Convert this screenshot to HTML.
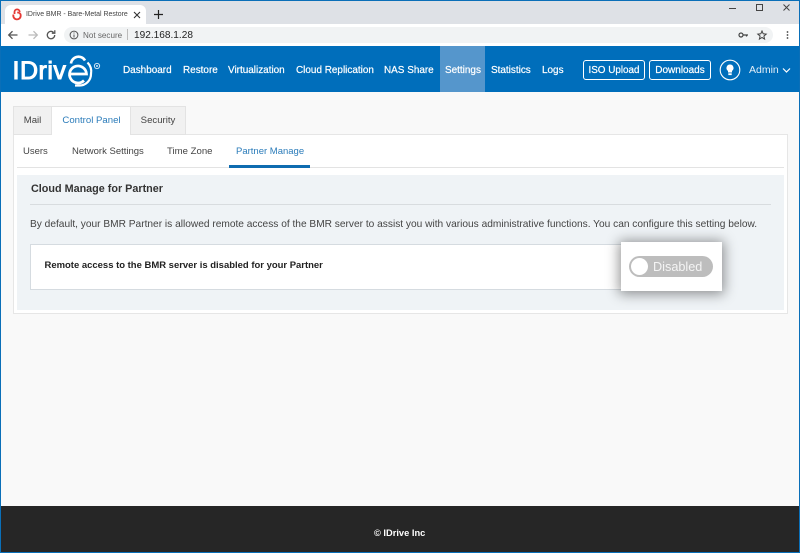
<!DOCTYPE html>
<html><head><meta charset="utf-8"><title>IDrive BMR</title>
<style>
*{box-sizing:border-box}
html,body{margin:0;padding:0;width:800px;height:553px;overflow:hidden;background:#f9f9f9;font-family:"Liberation Sans",sans-serif}
.a{position:absolute;white-space:nowrap}
.n{position:absolute;top:64px;font-size:9.950px;line-height:14px;color:#fff;white-space:nowrap;-webkit-text-stroke:.2px #fff}
</style></head><body>
<div class="a" style="left:0;top:0;width:800px;height:24px;background:#dee1e6"></div>
<div class="a" style="left:5px;top:5px;width:141px;height:20px;background:#fff;border-radius:6px 6px 0 0"></div>
<svg class="a" style="left:11px;top:8px" width="12" height="13" viewBox="0 0 12 13"><path d="M3.500 6V4a2.600 2.600 0 0 1 5.200 0M2.500 6.500a3.700 3.700 0 1 0 7.200 1c0-2-1.500-3-3.500-3" fill="none" stroke="#e53935" stroke-width="1.800"/></svg>
<div class="a" style="left:26px;top:9px;font-size:6.950px;line-height:11px;color:#444">IDrive BMR - Bare-Metal Restore</div>
<svg class="a" style="left:133px;top:11px" width="9" height="9" viewBox="0 0 9 9"><path d="M1 1l6 6M7 1l-6 6" stroke="#333" stroke-width="1.100"/></svg>
<svg class="a" style="left:154px;top:10px" width="9" height="9" viewBox="0 0 9 9"><path d="M4.500 0v9M0 4.500h9" stroke="#222" stroke-width="1.200"/></svg>
<svg class="a" style="left:727px;top:2px" width="70" height="14" viewBox="0 0 70 14"><path d="M2 6.500h7" stroke="#444"/><rect x="29.500" y="2.500" width="6" height="6" fill="none" stroke="#444"/><path d="M56.500 2.500l6 6M62.500 2.500l-6 6" stroke="#444"/></svg>
<div class="a" style="left:0;top:24px;width:800px;height:22px;background:#fff"></div>
<svg class="a" style="left:7px;top:29px" width="50" height="12" viewBox="0 0 50 12"><path d="M10.500 6H2M5.500 2.200L1.700 6l3.800 3.800" fill="none" stroke="#555" stroke-width="1.300"/><path d="M21.500 6H30M26.500 2.200L30.300 6l-3.800 3.800" fill="none" stroke="#bbb" stroke-width="1.300"/><path d="M47.700 6a3.700 3.700 0 1 1-1.100-2.600M47.800 1.200v3h-3" fill="none" stroke="#555" stroke-width="1.300"/></svg>
<div class="a" style="left:64px;top:27px;width:709px;height:16px;background:#f1f3f4;border-radius:8px"></div>
<svg class="a" style="left:69px;top:30px" width="10" height="10" viewBox="0 0 10 10"><circle cx="5" cy="5" r="3.900" fill="none" stroke="#555"/><path d="M5 4.500v3M5 2.500v1" stroke="#555"/></svg>
<div class="a" style="left:83px;top:29.500px;font-size:8.100px;line-height:11px;color:#666">Not secure</div>
<div class="a" style="left:127px;top:29px;width:1px;height:11px;background:#bbb"></div>
<div class="a" style="left:134px;top:28.500px;font-size:10.100px;line-height:13px;color:#222">192.168.1.28</div>
<svg class="a" style="left:738px;top:30px" width="60" height="11" viewBox="0 0 60 11"><circle cx="3" cy="5" r="2" fill="none" stroke="#444" stroke-width="1.200"/><path d="M5 5h5M8.500 5v1.500" stroke="#444" stroke-width="1.200"/><path d="M24 1l1.200 2.800 3 .3-2.300 2 .7 3L24 7.500l-2.600 1.600.7-3-2.300-2 3-.3z" fill="none" stroke="#444"/><circle cx="49.500" cy="2" r=".9" fill="#444"/><circle cx="49.500" cy="5" r=".9" fill="#444"/><circle cx="49.500" cy="8" r=".9" fill="#444"/></svg>

<div class="a" style="left:0;top:46px;width:800px;height:46px;background:#006ebb"></div>
<div class="a" style="left:440px;top:46px;width:45px;height:46px;background:#5596cc"></div>
<div class="a" style="left:12.500px;top:57px;font-size:25px;line-height:28px;color:#fff;letter-spacing:.5px;-webkit-text-stroke:1px #fff">IDriv</div>
<svg class="a" style="left:60px;top:48px" width="45" height="40" viewBox="0 0 45 40"><g fill="none" stroke="#fff"><path d="M11 15.500A7.500 7.500 0 0 1 25 12.500" stroke-width="2.600"/><path d="M9.500 26H26.500A8.500 8.500 0 1 0 24 32.500" stroke-width="2.700"/><path d="M27.500 14.500A13 13 0 0 1 31 26A11.500 11.500 0 0 1 19 37.500H15" stroke-width="2.200"/></g><circle cx="37" cy="18" r="2.600" fill="none" stroke="#cfe3f3" stroke-width="1"/><circle cx="37" cy="18" r="1" fill="#cfe3f3"/></svg>
<div class="n" style="left:123px">Dashboard</div>
<div class="n" style="left:183px">Restore</div>
<div class="n" style="left:228px">Virtualization</div>
<div class="n" style="left:296px">Cloud Replication</div>
<div class="n" style="left:384px">NAS Share</div>
<div class="n" style="left:445px">Settings</div>
<div class="n" style="left:491px">Statistics</div>
<div class="n" style="left:542px">Logs</div>
<div class="a" style="left:583px;top:60px;width:62px;height:20px;border:1px solid #fff;border-radius:3px;color:#fff;font-size:9.900px;line-height:19px;text-align:center;-webkit-text-stroke:.2px #fff">ISO Upload</div>
<div class="a" style="left:649px;top:60px;width:62px;height:20px;border:1px solid #fff;border-radius:3px;color:#fff;font-size:10px;line-height:19px;text-align:center;-webkit-text-stroke:.2px #fff">Downloads</div>
<svg class="a" style="left:719px;top:59px" width="22" height="22" viewBox="0 0 22 22"><circle cx="11" cy="11" r="9.800" fill="none" stroke="#fff" stroke-width="1.100"/><path d="M11 5.500a3.500 3.500 0 0 0-2 6.400V13.500h4v-1.600A3.500 3.500 0 0 0 11 5.500z" fill="#fff"/><rect x="9.300" y="14.300" width="3.400" height="1.800" fill="#fff"/></svg>
<div class="a" style="left:749px;top:63px;font-size:10.500px;line-height:14px;color:#e3eef7">Admin</div>
<svg class="a" style="left:782px;top:67px" width="9" height="7" viewBox="0 0 9 7"><path d="M1 1.500l3.500 3.500 3.500-3.500" fill="none" stroke="#fff" stroke-width="1.200"/></svg>

<div class="a" style="left:13px;top:134px;width:775px;height:180px;background:#fff;border:1px solid #e6e6e6"></div>
<div class="a" style="left:13px;top:106px;width:39px;height:29px;background:#f1f1f1;border:1px solid #e3e3e3;font-size:9.600px;line-height:27px;text-align:center;color:#444">Mail</div>
<div class="a" style="left:52px;top:106px;width:79px;height:29px;background:#fff;border-top:1px solid #e3e3e3;font-size:9.600px;line-height:27px;text-align:center;color:#2b7cba">Control Panel</div>
<div class="a" style="left:130px;top:106px;width:56px;height:29px;background:#f1f1f1;border:1px solid #e3e3e3;font-size:9.600px;line-height:27px;text-align:center;color:#444">Security</div>
<div class="a" style="left:23px;top:145px;font-size:9.500px;line-height:13px;color:#444">Users</div>
<div class="a" style="left:72px;top:145px;font-size:9.500px;line-height:13px;color:#444">Network Settings</div>
<div class="a" style="left:167px;top:145px;font-size:9.600px;line-height:13px;color:#444">Time Zone</div>
<div class="a" style="left:236px;top:145px;font-size:9.500px;line-height:13px;color:#2b7cba">Partner Manage</div>
<div class="a" style="left:17px;top:167px;width:767px;height:1px;background:#e3e3e3"></div>
<div class="a" style="left:229px;top:165px;width:81px;height:3px;background:#0f6cb0"></div>
<div class="a" style="left:17px;top:175px;width:767px;height:135px;background:#eff3f6"></div>
<div class="a" style="left:31px;top:182px;font-size:10.800px;line-height:14px;font-weight:bold;color:#333">Cloud Manage for Partner</div>
<div class="a" style="left:30px;top:204px;width:741px;height:1px;background:#d8dcdf"></div>
<div class="a" style="left:30px;top:217.500px;font-size:10.170px;line-height:14px;color:#444">By default, your BMR Partner is allowed remote access of the BMR server to assist you with various administrative functions. You can configure this setting below.</div>
<div class="a" style="left:30px;top:244px;width:595px;height:46px;background:#fff;border:1px solid #d5dbe0"></div>
<div class="a" style="left:44.500px;top:259.500px;font-size:9.470px;line-height:12px;font-weight:bold;color:#222">Remote access to the BMR server is disabled for your Partner</div>
<div class="a" style="left:621px;top:242px;width:101px;height:49px;background:#fff;box-shadow:0 1px 12px 2px rgba(0,0,0,.42)"></div>
<div class="a" style="left:629px;top:256px;width:84px;height:21px;background:#bdbdbd;border-radius:11px"></div>
<div class="a" style="left:631px;top:258px;width:17px;height:17px;background:#fff;border-radius:50%"></div>
<div class="a" style="left:653px;top:259.500px;font-size:12.700px;line-height:14px;color:#f4f4f4">Disabled</div>

<div class="a" style="left:0;top:506px;width:800px;height:47px;background:#262626"></div>
<div class="a" style="left:374px;top:526.500px;font-size:9.300px;line-height:12px;color:#fff;font-weight:bold">© IDrive Inc</div>
<div class="a" style="left:0;top:0;width:800px;height:553px;border:1px solid #0a6fb8;pointer-events:none"></div>
</body></html>
